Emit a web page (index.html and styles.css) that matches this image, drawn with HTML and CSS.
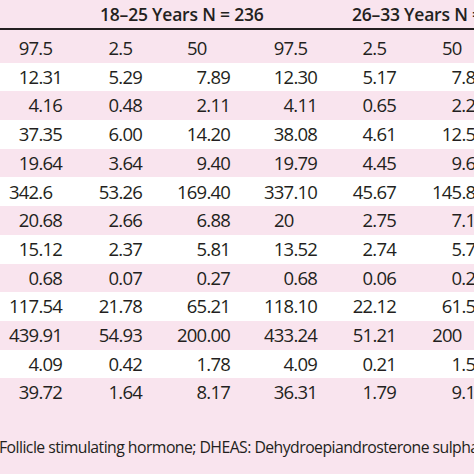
FILE: index.html
```html
<!DOCTYPE html>
<html>
<head>
<meta charset="utf-8">
<link rel="stylesheet" href="styles.css">
</head>
<body>
<div class="figure">
  <div class="head">
    <span class="group first">18–25 Years N = 236</span>
    <span class="group">26–33 Years N = 236</span>
  </div>
  <table class="data">
    <colgroup>
      <col class="c1"><col class="c2"><col class="c3"><col class="c4"><col class="c5"><col class="c6">
    </colgroup>
    <tbody>
      <tr><td class="p1">97.5</td><td class="p1">2.5</td><td class="p2">50</td><td class="p1">97.5</td><td class="p1">2.5</td><td class="p2">50</td></tr>
      <tr><td>12.31</td><td>5.29</td><td>7.89</td><td>12.30</td><td>5.17</td><td>7.89</td></tr>
      <tr><td>4.16</td><td>0.48</td><td>2.11</td><td>4.11</td><td>0.65</td><td>2.25</td></tr>
      <tr><td>37.35</td><td>6.00</td><td>14.20</td><td>38.08</td><td>4.61</td><td>12.50</td></tr>
      <tr><td>19.64</td><td>3.64</td><td>9.40</td><td>19.79</td><td>4.45</td><td>9.60</td></tr>
      <tr><td class="p1">342.6</td><td>53.26</td><td>169.40</td><td>337.10</td><td>45.67</td><td>145.80</td></tr>
      <tr><td>20.68</td><td>2.66</td><td>6.88</td><td class="p2">20</td><td>2.75</td><td>7.17</td></tr>
      <tr><td>15.12</td><td>2.37</td><td>5.81</td><td>13.52</td><td>2.74</td><td>5.72</td></tr>
      <tr><td>0.68</td><td>0.07</td><td>0.27</td><td>0.68</td><td>0.06</td><td>0.27</td></tr>
      <tr><td>117.54</td><td>21.78</td><td>65.21</td><td>118.10</td><td>22.12</td><td>61.50</td></tr>
      <tr><td>439.91</td><td>54.93</td><td>200.00</td><td>433.24</td><td>51.21</td><td class="p2">200</td></tr>
      <tr><td>4.09</td><td>0.42</td><td>1.78</td><td>4.09</td><td>0.21</td><td>1.50</td></tr>
      <tr><td>39.72</td><td>1.64</td><td>8.17</td><td>36.31</td><td>1.79</td><td>9.10</td></tr>
    </tbody>
  </table>
  <p class="note">Follicle stimulating hormone; DHEAS: Dehydroepiandrosterone sulphate</p>
</div>
</body>
</html>
```

FILE: styles.css
```css
html, body {
  margin: 0;
  padding: 0;
  background: #f9e4ee;
  overflow: hidden;
}
.figure {
  width: 474px;
  height: 474px;
  overflow: hidden;
  background: #f9e4ee;
  color: #231f20;
  font-family: "Open Sans", "Noto Sans", sans-serif;
}
.head {
  display: flex;
  height: 28px;
  align-items: center;
  border-bottom: 2px solid #231f20;
  white-space: nowrap;
  font-weight: 600;
  font-size: 17.5px;
  letter-spacing: -0.2px;
}
.group {
  flex: 0 0 252px;
}
.group.first {
  margin-left: 100px;
}
.data {
  margin-top: 4px;
  border-collapse: collapse;
  table-layout: fixed;
  width: 485px;
  font-size: 18.5px;
  letter-spacing: -0.8px;
}
.c1 { width: 62px; }
.c2 { width: 80px; }
.c3 { width: 88px; }
.c4 { width: 87px; }
.c5 { width: 79px; }
.c6 { width: 89px; }
.data td {
  height: 28.7px;
  padding: 0;
  text-align: right;
  white-space: nowrap;
  line-height: 1;
}
.data tr:nth-child(even) td {
  background: #ffffff;
}
.data td.p1 { padding-right: 9.8px; }
.data td.p2 { padding-right: 23.5px; }
.note {
  margin: 29px 0 0 -1px;
  font-size: 15.8px;
  white-space: nowrap;
  letter-spacing: -0.55px;
}
```
